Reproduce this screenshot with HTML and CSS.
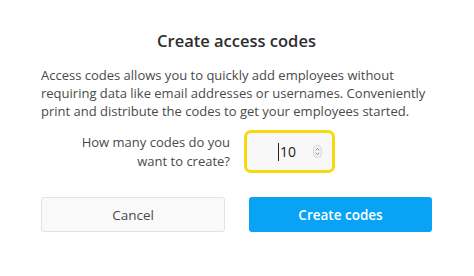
FILE: index.html
```html
<!DOCTYPE html>
<html>
<head>
    <title>Create access codes</title>
    <meta charset="UTF-8">
    <meta name="viewport" content="width=device-width, initial-scale=1.0">
    <link rel="stylesheet" href="styles.css">
</head>
<body>
    <div class="dialog">
        <h2 class="title">Create access codes</h2>
        <p class="intro">Access codes allows you to quickly add employees without requiring data like email addresses or usernames. Conveniently print and distribute the codes to get your employees started.</p>

        <div class="field-row">
            <label class="field-label" for="count">How many codes do you<br>want to create?</label>
            <div class="number-field" id="count">
                <span class="caret"></span>
                <span class="value">10</span>
                <svg class="spinner" width="9" height="13" viewBox="0 0 9 13">
                    <rect x="0.5" y="0.5" width="8" height="12" rx="4" fill="#f2f2f2" stroke="#d6d6d6"/>
                    <path d="M2.8 5.2 L4.5 3.4 L6.2 5.2" fill="none" stroke="#8a8a8a" stroke-width="1"/>
                    <path d="M2.8 7.8 L4.5 9.6 L6.2 7.8" fill="none" stroke="#8a8a8a" stroke-width="1"/>
                </svg>
            </div>
        </div>

        <div class="actions">
            <button class="btn btn-cancel">Cancel</button>
            <button class="btn btn-primary">Create codes</button>
        </div>
    </div>
</body>
</html>
```

FILE: styles.css
```css
:root {
    --text: #333333;
    --muted: #4a4a4a;
    --yellow: #f7d90f;
    --blue: #08a3f5;
}

body {
    margin: 0;
    background: #ffffff;
    font-family: 'Open Sans', 'Noto Sans', sans-serif;
    color: var(--text);
}

.dialog {
    padding: 29px 42px 0 41px;
}

.title {
    margin: 0;
    text-align: center;
    font-size: 16.5px;
    line-height: 24px;
    font-weight: 600;
    color: #2e2e2e;
}

.intro {
    margin: 13px 0 0 0;
    font-size: 13px;
    line-height: 18px;
    color: var(--muted);
}

.field-row {
    display: grid;
    grid-template-columns: 189px 91px;
    column-gap: 14px;
    align-items: center;
    margin-top: 10px;
}

.field-label {
    text-align: right;
    font-size: 13px;
    line-height: 19px;
    color: var(--muted);
}

.number-field {
    box-sizing: border-box;
    height: 43px;
    border: 3px solid var(--yellow);
    border-radius: 7px;
    background: #f8f8f8;
    display: flex;
    align-items: center;
    padding: 0 10px 0 31px;
    font-size: 14px;
    color: #222;
}

.caret {
    width: 1px;
    height: 18px;
    background: #222;
    margin-right: 1px;
}

.value {
    flex: 1;
}

.spinner {
    display: block;
}

.actions {
    display: grid;
    grid-template-columns: 184px 183px;
    column-gap: 24px;
    margin-top: 24px;
}

.btn {
    height: 35px;
    border-radius: 3px;
    font-family: inherit;
    font-size: 13.5px;
    cursor: pointer;
}

.btn-cancel {
    background: #f9f9f9;
    border: 1px solid #e2e2e2;
    color: var(--muted);
}

.btn-primary {
    background: var(--blue);
    border: none;
    color: #ffffff;
    font-weight: 600;
}
```
